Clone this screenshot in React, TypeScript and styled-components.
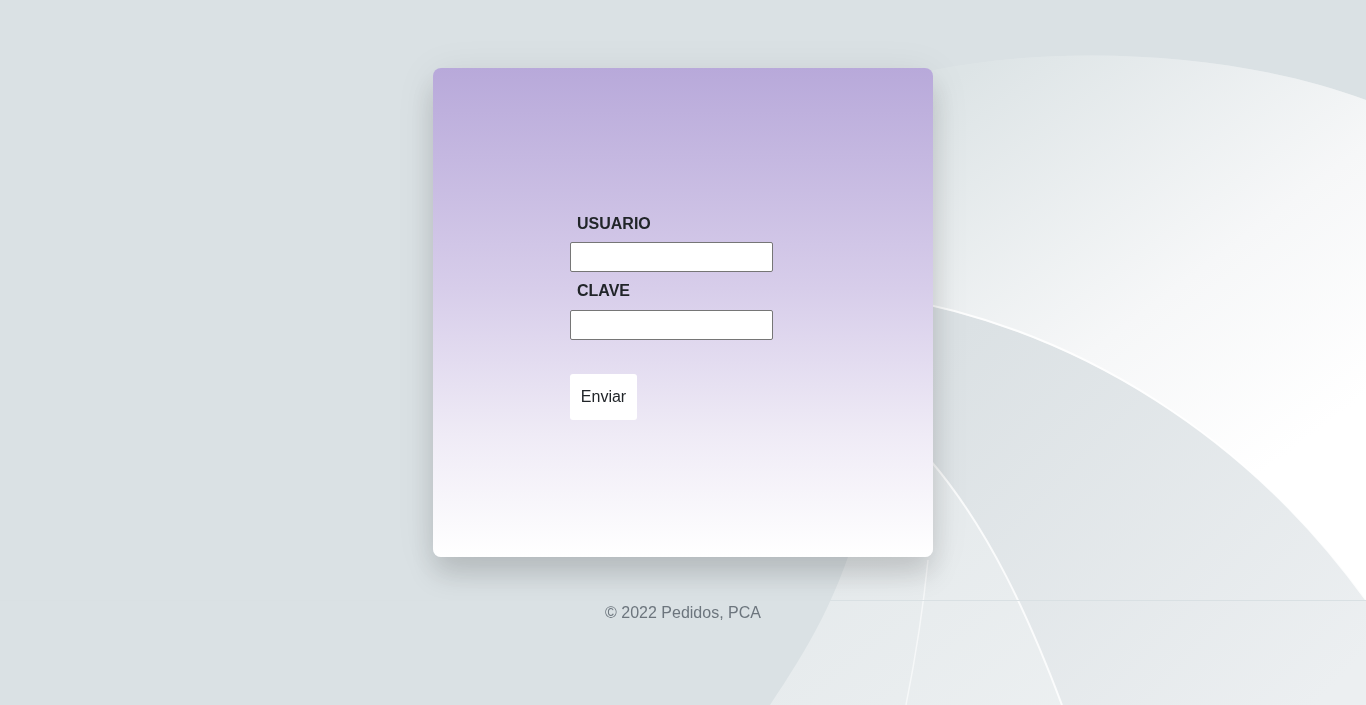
import styled, { createGlobalStyle } from "styled-components";

const GlobalStyle = createGlobalStyle`
  * { box-sizing: border-box; }
  html, body {
    margin: 0;
    padding: 0;
    font-family: "Liberation Sans", Arial, sans-serif;
    font-size: 16px;
    color: #212529;
    background: #dae1e4;
  }
`;

function Backdrop() {
  return (
    <SCBackdrop viewBox="0 0 1366 705" preserveAspectRatio="none" aria-hidden>
      <defs>
        <linearGradient id="gA" gradientUnits="userSpaceOnUse" x1="820" y1="100" x2="1300" y2="705">
          <stop offset="0" stopColor="#dde3e6" />
          <stop offset="1" stopColor="#eff2f3" />
        </linearGradient>
        <linearGradient id="gB" gradientUnits="userSpaceOnUse" x1="980" y1="60" x2="1280" y2="460">
          <stop offset="0" stopColor="#dde4e6" />
          <stop offset="0.6" stopColor="#f6f7f8" />
          <stop offset="1" stopColor="#ffffff" />
        </linearGradient>
        <linearGradient id="gC" gradientUnits="userSpaceOnUse" x1="960" y1="330" x2="1330" y2="690">
          <stop offset="0" stopColor="#dbe1e4" />
          <stop offset="1" stopColor="#eceff1" />
        </linearGradient>
      </defs>
      <rect x="0" y="0" width="1366" height="705" fill="#dae1e4" />
      <path
        d="M 770 705 C 830 615, 880 530, 890 300 L 860 90 C 1000 40, 1220 45, 1366 100 L 1366 705 Z"
        fill="url(#gA)"
      />
      <path
        d="M 890 298 C 1080 330, 1250 440, 1366 600 L 1366 100 C 1220 45, 1000 40, 860 90 Z"
        fill="url(#gB)"
      />
      <path
        d="M 890 298 C 1080 330, 1250 440, 1366 600 L 1366 705 L 1062 705 C 1030 620, 990 530, 930 460 Z"
        fill="url(#gC)"
      />
      <path
        d="M 890 297 C 1080 329, 1250 439, 1366 600"
        fill="none"
        stroke="#ffffff"
        strokeWidth="2"
        opacity="0.85"
      />
      <path
        d="M 930 460 C 990 530, 1030 620, 1062 705"
        fill="none"
        stroke="#ffffff"
        strokeWidth="2"
        opacity="0.8"
      />
      <path
        d="M 928 560 C 922 620, 913 670, 906 705"
        fill="none"
        stroke="#ffffff"
        strokeWidth="1.5"
        opacity="0.6"
      />
    </SCBackdrop>
  );
}

function App() {
  return (
    <>
      <GlobalStyle />
      <Backdrop />
      <SCPage>
        <SCMain>
          <SCCard>
            <SCForm onSubmit={(e) => e.preventDefault()}>
              <SCLabel htmlFor="usuario">USUARIO</SCLabel>
              <SCInput id="usuario" name="usuario" type="text" />
              <SCLabel htmlFor="clave" $spaced>
                CLAVE
              </SCLabel>
              <SCInput id="clave" name="clave" type="password" />
              <SCButton type="submit">Enviar</SCButton>
            </SCForm>
          </SCCard>
        </SCMain>
        <SCFooter>© 2022 Pedidos, PCA</SCFooter>
      </SCPage>
    </>
  );
}

const SCBackdrop = styled.svg`
  position: fixed;
  inset: 0;
  width: 100%;
  height: 100%;
  z-index: 0;
`;

const SCPage = styled.div`
  position: relative;
  z-index: 1;
  min-height: 100vh;
  display: flex;
  flex-direction: column;
`;

const SCMain = styled.main`
  display: flex;
  justify-content: center;
  padding-top: 68px;
`;

const SCCard = styled.section`
  width: 500px;
  height: 489px;
  border-radius: 8px;
  background: linear-gradient(180deg, #b8a9da 0%, #d7cdea 45%, #efebf6 75%, #ffffff 100%);
  box-shadow: 0 18px 28px rgba(0, 0, 0, 0.13), 0 6px 40px rgba(0, 0, 0, 0.08);
  display: flex;
  justify-content: center;
  padding-top: 144px;
`;

const SCForm = styled.form`
  width: 226px;
  display: flex;
  flex-direction: column;
  align-items: flex-start;
`;

const SCLabel = styled.label<{ $spaced?: boolean }>`
  display: block;
  padding-left: 7px;
  font-weight: 700;
  font-size: 16px;
  line-height: 24px;
  color: #212529;
  margin-top: ${(p) => (p.$spaced ? "7px" : "0")};
  margin-bottom: ${(p) => (p.$spaced ? "7px" : "6px")};
`;

const SCInput = styled.input`
  width: 203px;
  height: 30px;
  border: 1px solid #767676;
  border-radius: 2px;
  background: #ffffff;
  padding: 1px 4px;
  font-family: inherit;
  font-size: 16px;
`;

const SCButton = styled.button`
  margin-top: 34px;
  width: 67px;
  height: 46px;
  border: none;
  border-radius: 3px;
  background: #ffffff;
  color: #212529;
  font-family: "Liberation Sans", Arial, sans-serif;
  font-size: 16px;
  line-height: 24px;
  padding: 0;
  cursor: pointer;
`;

const SCFooter = styled.footer`
  margin-top: 43px;
  border-top: 1px solid #d9e0e3;
  padding-top: 1px;
  text-align: center;
  line-height: 22px;
  font-size: 16px;
  color: #6c757d;
`;

export default App;
